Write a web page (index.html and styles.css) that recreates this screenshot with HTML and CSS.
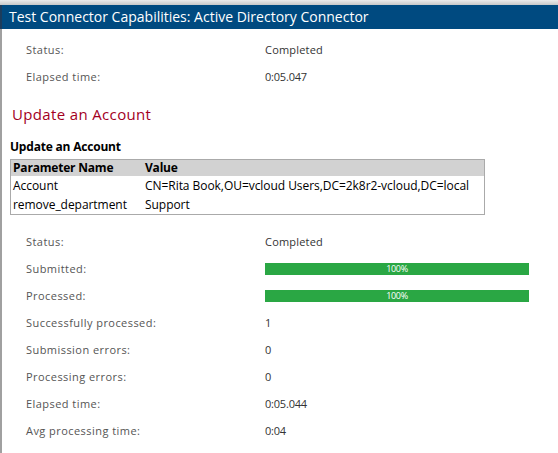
FILE: index.html
```html
<!DOCTYPE html>
<html>
<head>
<meta charset="utf-8">
<link rel="stylesheet" href="styles.css">
</head>
<body>
<div class="topstrip"></div>
<div class="titlebar">Test Connector Capabilities: Active Directory Connector</div>
<div class="content">
  <div class="stats first">
    <div class="label">Status:</div><div class="value">Completed</div>
    <div class="label">Elapsed time:</div><div class="value num">0:05.047</div>
  </div>
  <h2 class="section">Update an Account</h2>
  <h3 class="subhead">Update an Account</h3>
  <table class="params">
    <thead>
      <tr><th class="c1">Parameter Name</th><th>Value</th></tr>
    </thead>
    <tbody>
      <tr><td class="c1">Account</td><td>CN=Rita Book,OU=vcloud Users,DC=2k8r2-vcloud,DC=local</td></tr>
      <tr><td class="c1">remove_department</td><td>Support</td></tr>
    </tbody>
  </table>
  <div class="stats second">
    <div class="label">Status:</div><div class="value">Completed</div>
    <div class="label">Submitted:</div><div class="value"><div class="bar"><div class="fill" style="width:100%">100%</div></div></div>
    <div class="label">Processed:</div><div class="value"><div class="bar"><div class="fill" style="width:100%">100%</div></div></div>
    <div class="label">Successfully processed:</div><div class="value num">1</div>
    <div class="label">Submission errors:</div><div class="value num">0</div>
    <div class="label">Processing errors:</div><div class="value num">0</div>
    <div class="label">Elapsed time:</div><div class="value num">0:05.044</div>
    <div class="label">Avg processing time:</div><div class="value num">0:04</div>
  </div>
</div>
</body>
</html>
```
FILE: styles.css
```css
html, body {
  margin: 0;
  padding: 0;
  background: #fff;
  font-family: "Open Sans", "DejaVu Sans", sans-serif;
}
body {
  width: 558px;
  height: 453px;
  overflow: hidden;
}
.topstrip {
  height: 5px;
  background: linear-gradient(#ececec, #c8c8c8);
}
.titlebar {
  height: 24px;
  line-height: 24px;
  background: #004a80;
  color: #fff;
  font-size: 14px;
  white-space: nowrap;
  border-left: 2px solid #1c3c5c;
  box-sizing: border-box;
  padding-left: 7px;
}
.content {
  border-left: 2px solid #a0a0a0;
  height: 424px;
  box-sizing: border-box;
}
.stats {
  display: grid;
  grid-template-columns: 239px 264px;
  grid-auto-rows: 27px;
  align-items: center;
  padding-left: 24px;
}
.stats.first {
  padding-top: 7px;
}
.stats.second {
  padding-top: 13px;
}
.label {
  font-size: 11px;
  color: #555;
  letter-spacing: 0.45px;
}
.value {
  font-size: 11px;
  color: #333;
  letter-spacing: 0.2px;
}
.value.num {
  letter-spacing: -0.2px;
}
.section {
  margin: 14px 0 0 10px;
  font-size: 15px;
  font-weight: normal;
  line-height: 20px;
  color: #a3001e;
  letter-spacing: 0.35px;
}
.subhead {
  margin: 15px 0 0 8px;
  font-size: 12px;
  font-weight: bold;
  line-height: 16px;
  color: #000;
  letter-spacing: -0.2px;
}
.params {
  margin: 4px 0 0 8px;
  width: 475px;
  border-collapse: collapse;
  border: 1px solid #aaa;
  font-size: 12px;
  color: #000;
}
.params th {
  background: #d2d2d2;
  text-align: left;
  font-weight: bold;
  height: 16px;
  padding: 0 0 0 2px;
  line-height: 16px;
  letter-spacing: -0.2px;
}
.params td {
  height: 19px;
  padding: 0 0 0 2px;
  line-height: 19px;
  letter-spacing: -0.05px;
}
.params .c1 {
  width: 130px;
}
.bar {
  height: 12px;
  width: 264px;
  background: #e0e0e0;
}
.fill {
  height: 12px;
  background: #2aa744;
  color: #fff;
  font-size: 9px;
  line-height: 12px;
  text-align: center;
  letter-spacing: -0.3px;
}
```
